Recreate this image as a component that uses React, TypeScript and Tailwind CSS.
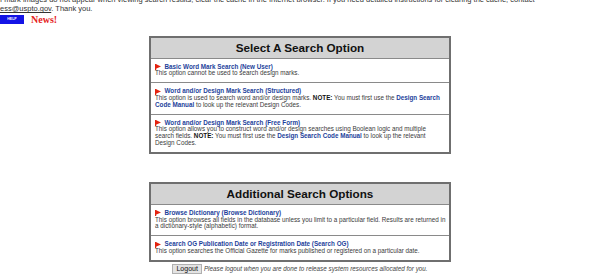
import React from "react";

function Flag() {
  return (
    <svg width="6" height="6" viewBox="0 0 6 6" className="shrink-0">
      <rect x="0" y="0" width="1.2" height="6" fill="#e3230f" />
      <path d="M0.8 0 L6 2.4 L0.8 4.8 Z" fill="#e3230f" />
    </svg>
  );
}

function Row({ title, children, first }: { title: string; children: React.ReactNode; first?: boolean }) {
  return (
    <div className={`px-[4px] pt-[5px] pb-[5px] ${first ? "" : "border-t-[1.5px] border-[#8a8a8a]"}`}>
      <div className="flex items-center gap-[3.5px]">
        <Flag />
        <span className="font-bold text-[#1d3f9b]">{title}</span>
      </div>
      <div className="whitespace-nowrap">{children}</div>
    </div>
  );
}

function B({ children }: { children: React.ReactNode }) {
  return <span className="font-bold text-[#111]">{children}</span>;
}
function L({ children }: { children: React.ReactNode }) {
  return <span className="font-bold text-[#1d3f9b]">{children}</span>;
}

function Box({ title, children }: { title: string; children: React.ReactNode }) {
  return (
    <div className="mx-auto w-[302px] border-2 border-[#6f6f6f] bg-white">
      <div className="h-[21px] bg-[#d3d3d3] border-b-[1.5px] border-[#8a8a8a] flex items-center justify-center text-[11.7px] font-bold text-[#111] leading-none">
        {title}
      </div>
      <div className="text-[6.3px] leading-[6.8px] text-[#3a3a3a]">{children}</div>
    </div>
  );
}

export default function App() {
  return (
    <div className="w-[600px] h-[277px] overflow-hidden bg-white font-['Liberation_Sans',Arial,sans-serif] text-[#333]">
      <div className="-mt-[5px]">
        <div className="text-[7.5px] leading-[9.3px] whitespace-nowrap text-[#333]">
          <div>
            f mark images do not appear when viewing search results, clear the cache in the Internet browser. If you need detailed instructions for clearing the cache, contact
          </div>
          <div>
            <span className="underline">ess@uspto.gov</span>. Thank you.
          </div>
        </div>
        <div className="flex items-center gap-[7px] mt-[1px]">
          <div className="w-[24px] h-[8.5px] bg-[#1414e6] flex items-center justify-center text-white text-[3.5px] font-bold leading-none">
            HELP
          </div>
          <span className="font-['Liberation_Serif',serif] font-bold text-[10px] leading-none text-[#e52222]">
            News!
          </span>
        </div>

        <div className="mt-[11px]">
          <Box title="Select A Search Option">
            <Row first title="Basic Word Mark Search (New User)">
              This option cannot be used to search design marks.
            </Row>
            <Row title="Word and/or Design Mark Search (Structured)">
              This option is used to search word and/or design marks. <B>NOTE:</B> You must first use the <L>Design Search</L>
              <br />
              <L>Code Manual</L> to look up the relevant Design Codes.
            </Row>
            <Row title="Word and/or Design Mark Search (Free Form)">
              This option allows you to construct word and/or design searches using Boolean logic and multiple
              <br />
              search fields. <B>NOTE:</B> You must first use the <L>Design Search Code Manual</L> to look up the relevant
              <br />
              Design Codes.
            </Row>
          </Box>
        </div>

        <div className="mt-[28px]">
          <Box title="Additional Search Options">
            <Row first title="Browse Dictionary (Browse Dictionary)">
              This option browses all fields in the database unless you limit to a particular field. Results are returned in
              <br />
              a dictionary-style (alphabetic) format.
            </Row>
            <Row title="Search OG Publication Date or Registration Date (Search OG)">
              This option searches the Official Gazette for marks published or registered on a particular date.
            </Row>
          </Box>
        </div>

        <div className="flex items-center justify-center gap-[2px] mt-[2px]">
          <div className="h-[10px] px-[3px] bg-[#e3e3e3] border border-[#b0b0b0] flex items-center text-[7px] leading-none text-[#111]">
            Logout
          </div>
          <span className="italic text-[6.3px] text-[#444] whitespace-nowrap">
            Please logout when you are done to release system resources allocated for you.
          </span>
        </div>
      </div>
    </div>
  );
}
